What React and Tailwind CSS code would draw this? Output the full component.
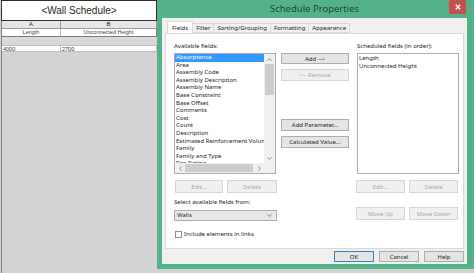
import { ChevronUp, ChevronDown, ChevronLeft, ChevronRight } from "lucide-react";

const fields = [
  "Absorptance",
  "Area",
  "Assembly Code",
  "Assembly Description",
  "Assembly Name",
  "Base Constraint",
  "Base Offset",
  "Comments",
  "Cost",
  "Count",
  "Description",
  "Estimated Reinforcement Volume",
  "Family",
  "Family and Type",
  "Fire Rating",
];

const tabs = ["Fields", "Filter", "Sorting/Grouping", "Formatting", "Appearance"];

const Btn = ({ children, disabled, className = "" }) => (
  <div
    className={`flex items-center justify-center border text-[6px] leading-none ${
      disabled
        ? "border-[#d6d6d6] bg-[#efefef] text-[#a6a6a6]"
        : "border-[#adadad] bg-[#e5e5e5] text-[#1e1e1e]"
    } ${className}`}
  >
    {children}
  </div>
);

const SchedulePanel = () => (
  <div className="flex h-full w-[157px] shrink-0 flex-col bg-[#d3d3d3] pl-[1px] font-['Liberation_Sans',sans-serif]">
    <div className="flex h-[21px] items-center justify-center border border-[#2e2e2e] bg-white text-[10px] text-[#1f1f1f]">
      &lt;Wall Schedule&gt;
    </div>
    <div className="flex flex-1 flex-col border-l border-[#7d7d7d]">
      <div className="flex h-[8px] border-b border-r border-[#9a9a9a] bg-[#e6e6e6] text-[6px] leading-[7px] text-[#222]">
        <div className="w-[59px] border-r border-[#9a9a9a] text-center">A</div>
        <div className="flex-1 text-center">B</div>
      </div>
      <div className="flex h-[8px] border-b border-r border-[#7a7a7a] bg-white text-[5.5px] leading-[7px] text-[#444]">
        <div className="w-[59px] border-r border-[#bdbdbd] text-center">Length</div>
        <div className="flex-1 text-center">Unconnected Height</div>
      </div>
      <div className="h-[8px] bg-[#d9d9d9]" />
      <div className="flex h-[7px] border-y border-r border-[#bdbdbd] bg-white text-[5.5px] leading-[6px] text-[#333]">
        <div className="w-[59px] border-r border-[#bdbdbd] pl-[1px]">4000</div>
        <div className="flex-1 pl-[1px]">2700</div>
      </div>
    </div>
  </div>
);

const AvailableList = () => (
  <div className="flex h-[121px] w-[102px] flex-col border border-[#acacac] bg-white">
    <div className="flex min-h-0 flex-1">
      <div className="min-w-0 flex-1 overflow-hidden text-[6px] leading-[7.6px] text-[#1e1e1e]">
        {fields.map((f, i) => (
          <div
            key={f}
            className={`whitespace-nowrap pl-[1px] ${i === 0 ? "bg-[#3399ff] text-white" : ""}`}
          >
            {f}
          </div>
        ))}
      </div>
      <div className="flex w-[11px] shrink-0 flex-col bg-[#f0f0f0]">
        <div className="flex h-[10px] items-center justify-center text-[#606060]">
          <ChevronUp size={7} strokeWidth={2.5} />
        </div>
        <div className="mx-[1px] h-[31px] bg-[#cdcdcd]" />
        <div className="flex-1" />
        <div className="flex h-[10px] items-center justify-center text-[#606060]">
          <ChevronDown size={7} strokeWidth={2.5} />
        </div>
      </div>
    </div>
    <div className="flex h-[10px] shrink-0 bg-[#f0f0f0]">
      <div className="flex w-[10px] items-center justify-center text-[#606060]">
        <ChevronLeft size={7} strokeWidth={2.5} />
      </div>
      <div className="my-[1px] w-[68px] bg-[#cdcdcd]" />
      <div className="flex-1" />
      <div className="flex w-[10px] items-center justify-center text-[#606060]">
        <ChevronRight size={7} strokeWidth={2.5} />
      </div>
      <div className="w-[11px] bg-[#f0f0f0]" />
    </div>
  </div>
);

const Dialog = () => (
  <div className="flex h-[269px] flex-1 flex-col bg-[#55b288] pb-[5px] pl-[5px] pr-[7px] font-['Noto_Sans',sans-serif]">
    <div className="relative flex h-[18px] shrink-0 items-center justify-center">
      <span className="text-[9.5px] text-[#24463a]">Schedule Properties</span>
      <div className="absolute right-[1px] top-0 flex h-[14px] w-[17px] items-center justify-center bg-[#c94f4f]">
        <svg width="6" height="6" viewBox="0 0 6 6">
          <path d="M0.8 0.8 L5.2 5.2 M5.2 0.8 L0.8 5.2" stroke="white" strokeWidth="1.4" />
        </svg>
      </div>
    </div>
    <div className="flex flex-1 flex-col bg-[#f0f0f0] px-[3px] pt-[3px]">
      <div className="flex pl-[2px] text-[6px] leading-none text-[#1e1e1e]">
        {tabs.map((t, i) => (
          <div
            key={t}
            className={
              i === 0
                ? "relative z-10 -mb-px flex h-[12px] items-center border border-b-0 border-[#d9d9d9] bg-white px-[4px]"
                : "mt-[2px] flex h-[10px] items-center border border-l-0 border-[#d9d9d9] bg-[#f0f0f0] px-[3px]"
            }
          >
            {t}
          </div>
        ))}
      </div>
      <div className="flex h-[216px] gap-[4px] border border-[#d9d9d9] bg-white pl-[8px] pt-[9px] text-[6px] text-[#1e1e1e]">
        <div className="flex w-[103px] flex-col">
          <div className="mb-[3px] h-[7px] leading-[7px]">Available fields:</div>
          <AvailableList />
          <div className="mt-[6px] flex gap-[4px] pl-[1px]">
            <Btn disabled className="h-[13px] w-[48px]">Edit...</Btn>
            <Btn disabled className="h-[13px] w-[50px]">Delete</Btn>
          </div>
          <div className="mt-[6px] h-[7px] leading-[7px]">Select available fields from:</div>
          <div className="mt-[4px] flex h-[11px] items-center justify-between border border-[#acacac] bg-[#e8e8e8] pl-[2px] pr-[3px]">
            <span>Walls</span>
            <ChevronDown size={7} strokeWidth={2.5} className="text-[#555]" />
          </div>
          <div className="mt-[10px] flex items-center gap-[2px] pl-[1px]">
            <div className="h-[7px] w-[7px] border border-[#8f8f8f] bg-white" />
            <span className="leading-[7px]">Include elements in links</span>
          </div>
        </div>
        <div className="flex w-[68px] flex-col pt-[10px]">
          <Btn className="h-[11px]">Add --&gt;</Btn>
          <Btn disabled className="mt-[5px] h-[12px]">&lt;-- Remove</Btn>
          <Btn className="mt-[38px] h-[12px]">Add Parameter...</Btn>
          <Btn className="mt-[5px] h-[12px]">Calculated Value...</Btn>
        </div>
        <div className="ml-[3px] flex w-[103px] flex-col">
          <div className="mb-[3px] h-[7px] pl-[1px] leading-[7px]">Scheduled fields (in order):</div>
          <div className="ml-[1px] h-[121px] w-[102px] border border-[#acacac] bg-white pl-[1px] pt-[1px] leading-[7.6px]">
            <div>Length</div>
            <div>Unconnected Height</div>
          </div>
          <div className="mt-[6px] flex gap-[4px]">
            <Btn disabled className="h-[13px] w-[49px]">Edit...</Btn>
            <Btn disabled className="h-[13px] w-[49px]">Delete</Btn>
          </div>
          <div className="mt-[14px] flex gap-[4px]">
            <Btn disabled className="h-[13px] w-[49px]">Move Up</Btn>
            <Btn disabled className="h-[13px] w-[49px]">Move Down</Btn>
          </div>
        </div>
      </div>
      <div className="mt-[2px] flex justify-end gap-[5px]">
        <Btn className="h-[11px] w-[40px] !border-[#3c7fb1]">OK</Btn>
        <Btn className="h-[11px] w-[40px]">Cancel</Btn>
        <Btn className="h-[11px] w-[40px]">Help</Btn>
      </div>
    </div>
  </div>
);

export default function App() {
  return (
    <div className="flex h-[273px] w-[474px] overflow-hidden bg-[#d3d3d3]">
      <SchedulePanel />
      <Dialog />
    </div>
  );
}
